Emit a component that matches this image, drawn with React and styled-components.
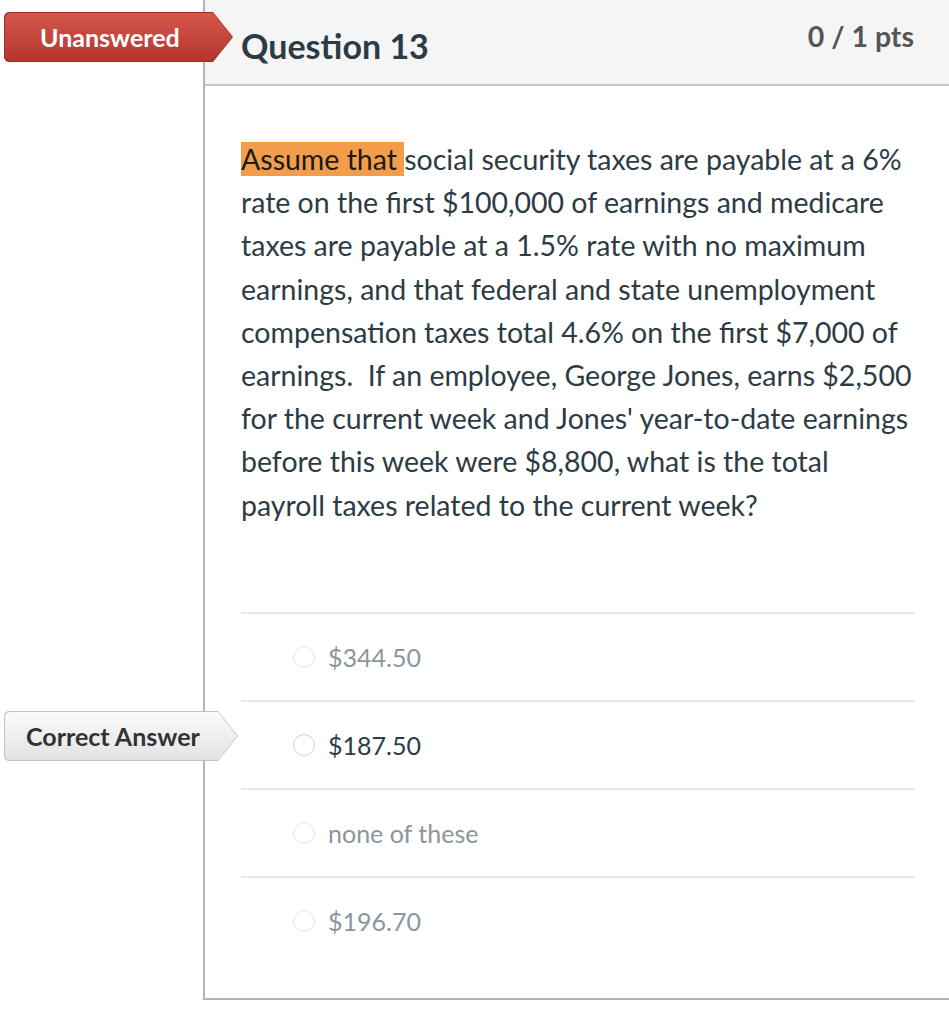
import React from "react";
import styled, { createGlobalStyle } from "styled-components";

const Global = createGlobalStyle`
  html, body { margin: 0; padding: 0; background: #fff; }
  body { font-family: Lato, "Noto Sans", sans-serif; color: #2d3b45; }
`;

const Page = styled.div`
  position: relative;
  padding-left: 203px;
  width: 949px;
  box-sizing: border-box;
  overflow: hidden;
`;

const Box = styled.div`
  border-left: 2px solid #b5b5b5;
  border-bottom: 2px solid #b5b5b5;
  width: 760px;
  height: 1000px;
  box-sizing: border-box;
`;

const Header = styled.div`
  height: 86px;
  box-sizing: border-box;
  background: #f5f5f5;
  border-bottom: 2px solid #c7c7c7;
  display: flex;
  align-items: flex-start;
  justify-content: space-between;
  padding: 24px 0 0 36px;
  width: 744px;
`;

const Title = styled.h2`
  margin: 0;
  font-size: 34px;
  font-weight: 700;
  color: #2d3b45;
  line-height: 44px;
`;

const Points = styled.div`
  font-size: 28.5px;
  font-weight: 700;
  color: #555;
  line-height: 30px;
  margin-top: -3px;
  padding-right: 35px;
`;

const Content = styled.div`
  padding: 52px 0 0 36px;
  width: 674px;
`;

const QuestionText = styled.p`
  margin: 0;
  font-size: 28.5px;
  line-height: 43.2px;
  color: #2d3b45;
`;

const Highlight = styled.span`
  background: #f39c4a;
  color: #1a1a1a;
`;

const Answers = styled.div`
  margin-top: 85px;
`;

const AnswerRow = styled.div`
  height: 88px;
  box-sizing: border-box;
  border-top: 2px solid #e8e8e8;
  display: flex;
  align-items: center;
  padding-left: 52px;
  gap: 13px;
`;

const Radio = styled.span`
  width: 22px;
  height: 22px;
  border-radius: 50%;
  border: 1px solid ${(p) => (p.$correct ? "#cfcfcf" : "#e4e4e4")};
  background: #fff;
  box-sizing: border-box;
  flex: none;
`;

const AnswerText = styled.span`
  font-size: 25px;
  color: ${(p) => (p.$correct ? "#2d3b45" : "#8b959c")};
`;

const arrow = (tip) =>
  `polygon(0 4px, 2px 1px, 4px 0, calc(100% - ${tip}px) 0, 100% 50%, calc(100% - ${tip}px) 100%, 4px 100%, 2px calc(100% - 1px), 0 calc(100% - 4px))`;

const BadgeEdge = styled.div`
  position: absolute;
  left: 4px;
  top: ${(p) => p.$top - 1}px;
  height: 50px;
  width: ${(p) => p.$w + 2}px;
  background: ${(p) => (p.$red ? "#9e2f28" : "#c3c3c3")};
  clip-path: ${arrow(20)};
`;

const Badge = styled.div`
  position: absolute;
  left: 1px;
  top: 1px;
  height: 48px;
  width: ${(p) => p.$w}px;
  box-sizing: border-box;
  padding-left: ${(p) => p.$pad}px;
  display: flex;
  align-items: center;
  font-size: 25px;
  font-weight: 700;
  white-space: nowrap;
  color: ${(p) => (p.$red ? "#fff" : "#333")};
  background: ${(p) =>
    p.$red
      ? "linear-gradient(#d6574c, #b3352d)"
      : "linear-gradient(#fbfbfb, #e3e3e3)"};
  clip-path: ${arrow(19)};
`;

const answers = [
  { text: "$344.50" },
  { text: "$187.50", correct: true },
  { text: "none of these" },
  { text: "$196.70" },
];

export default function App() {
  return (
    <>
      <Global />
      <Page>
        <Box>
          <Header>
            <Title>Question 13</Title>
            <Points>0 / 1 pts</Points>
          </Header>
          <Content>
            <QuestionText>
              <Highlight>Assume that </Highlight>social security taxes are payable at a 6% rate on the
              first $100,000 of earnings and medicare taxes are payable at a 1.5% rate with no
              maximum earnings, and that federal and state unemployment compensation taxes total
              4.6% on the first $7,000 of earnings.&nbsp; If an employee, George Jones, earns $2,500
              for the current week and Jones' year-to-date earnings before this week were $8,800,
              what is the total payroll taxes related to the current week?
            </QuestionText>
            <Answers>
              {answers.map((a) => (
                <AnswerRow key={a.text}>
                  <Radio $correct={a.correct} />
                  <AnswerText $correct={a.correct}>{a.text}</AnswerText>
                </AnswerRow>
              ))}
            </Answers>
          </Content>
        </Box>
        <BadgeEdge $top={13} $w={227} $red>
          <Badge $w={227} $pad={35} $red>Unanswered</Badge>
        </BadgeEdge>
        <BadgeEdge $top={712} $w={232}>
          <Badge $w={232} $pad={21}>Correct Answer</Badge>
        </BadgeEdge>
      </Page>
    </>
  );
}
